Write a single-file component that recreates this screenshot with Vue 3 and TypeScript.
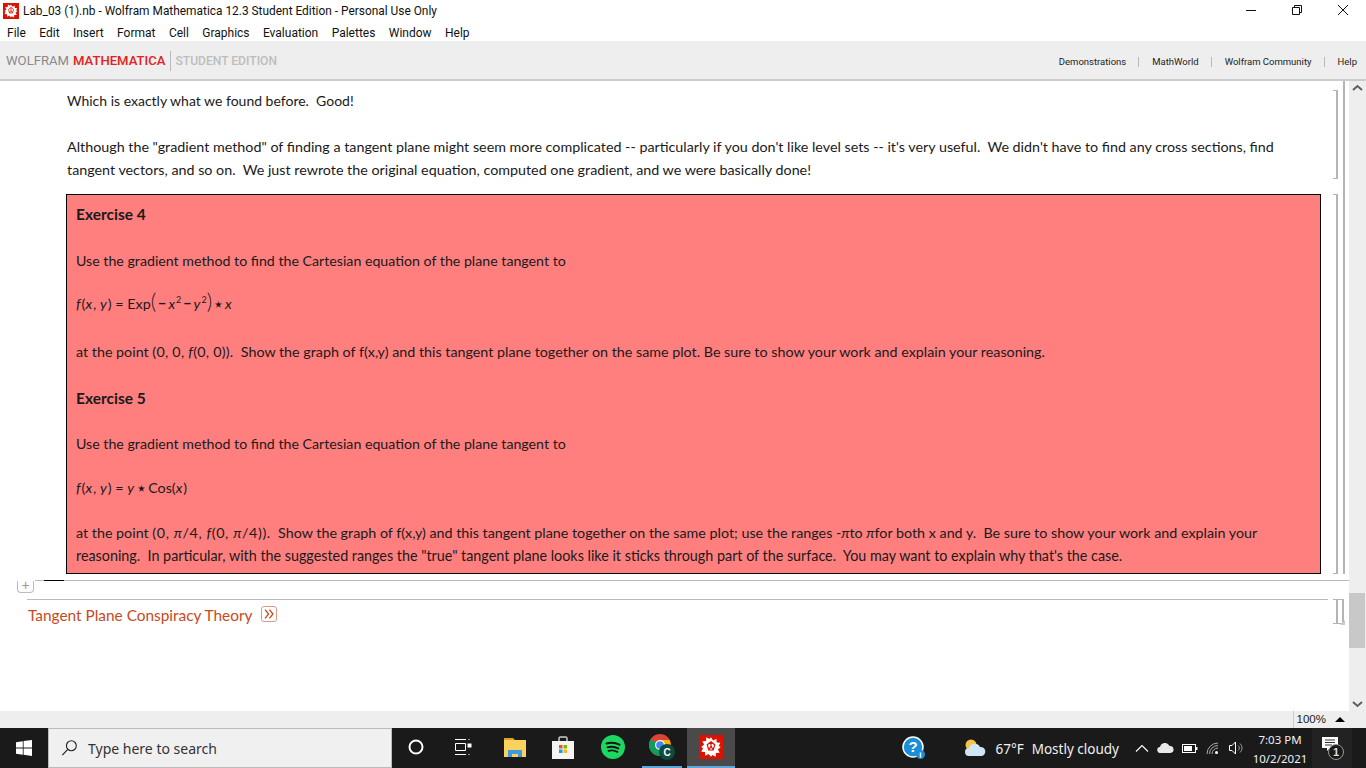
<script setup lang="ts">
const menus: string[] = ['File','Edit','Insert','Format','Cell','Graphics','Evaluation','Palettes','Window','Help']
const links: string[] = ['Demonstrations','MathWorld','Wolfram Community','Help']
</script>

<template>
  <div class="app">
    <header class="title">
      <svg class="appicon" viewBox="0 0 16 16"><rect width="16" height="16" fill="#dd1100"/><path d="M8 1.5l1.4 2.2 2.2-1.2.2 2.5 2.5.2-1.2 2.2L14.5 8l-1.9 1.6 1.2 2.2-2.5.2-.2 2.5-2.2-1.2L8 14.5l-1.6-1.9-2.2 1.2-.2-2.5-2.5-.2 1.2-2.2L1.5 8l1.9-1.6-1.2-2.2 2.5-.2.2-2.5 2.2 1.2z" fill="#fff"/><path d="M8 4.500l2.500 2-1 3.500h-3l-1-3.500zM8 4.500v3M6.500 10l1.500-2.500L9.500 10" fill="none" stroke="#dd1100" stroke-width=".8"/></svg>
      <span class="titletext">Lab_03 (1).nb - Wolfram Mathematica 12.3 Student Edition - Personal Use Only</span>
      <div class="winctl">
        <svg class="ctl" viewBox="0 0 46 22"><path d="M18 10.500h10" stroke="#111" fill="none"/></svg>
        <svg class="ctl" viewBox="0 0 46 22"><path d="M18.500 7.500h7v7h-7zM20.500 7.500v-2h7v7h-2" stroke="#111" fill="none"/></svg>
        <svg class="ctl" viewBox="0 0 46 22"><path d="M18 5l10 10M28 5l-10 10" stroke="#111" fill="none"/></svg>
      </div>
    </header>
    <nav class="menu"><span v-for="m in menus" :key="m">{{ m }}</span></nav>
    <div class="brand">
      <div class="logo"><span class="wolf">WOLFRAM</span><span class="math">MATHEMATICA</span><span class="stud">STUDENT EDITION</span></div>
      <div class="links"><span v-for="l in links" :key="l">{{ l }}</span></div>
    </div>
    <div class="mid">
      <main class="doc">
        <section class="cell text">
          <p class="l first">Which is exactly what we found before.&nbsp; Good!</p>
          <p class="l">&nbsp;</p>
          <p class="l">Although the "gradient method" of finding a tangent plane might seem more complicated -- particularly if you don't like level sets -- it's very useful.&nbsp; We didn't have to find any cross sections, find</p>
          <p class="l">tangent vectors, and so on.&nbsp; We just rewrote the original equation, computed one gradient, and we were basically done!</p>
        </section>
        <section class="red">
          <p class="l head">Exercise 4</p>
          <p class="l gap use">Use the gradient method to find the Cartesian equation of the plane tangent to</p>
          <p class="l gap-a math-line"><i>f</i>(<i>x</i>, <i>y</i>) = Exp<span class="paren">(</span><b class="op">−</b><i>x</i><sup>2</sup><b class="op">−</b><i>y</i><sup>2</sup><span class="paren">)</span><b class="star">⋆</b><i>x</i></p>
          <p class="l gap3">at the point <span class="m1">(0, 0, <i>f</i>(0, 0)).</span>&nbsp; Show the graph of f(x,y) and this tangent plane together on the same plot. Be sure to show your work and explain your reasoning.</p>
          <p class="l gap head down">Exercise 5</p>
          <p class="l gap use">Use the gradient method to find the Cartesian equation of the plane tangent to</p>
          <p class="l gap2 math-line"><i>f</i>(<i>x</i>, <i>y</i>) = <i>y</i><b class="star">⋆</b>Cos(<i>x</i>)</p>
          <p class="l gap-b">at the point <span class="m2">(0, <i>π</i>/4, <i>f</i>(0, <i>π</i>/4)).</span>&nbsp; Show the graph of f(x,y) and this tangent plane together on the same plot; use the ranges -<i>π</i>to <i>π</i>for both x and y.&nbsp; Be sure to show your work and explain your</p>
          <p class="l last">reasoning.&nbsp; In particular, with the suggested ranges the "true" tangent plane looks like it sticks through part of the surface.&nbsp; You may want to explain why that's the case.</p>
          <i class="brk b1"></i>
          <i class="brk outer"></i>
        </section>
        <div class="insert"><span class="plus">+</span><span class="tick"></span></div>
        <section class="sub">
          <span class="subtitle">Tangent Plane Conspiracy Theory</span>
          <span class="more"><svg viewBox="0 0 16 16" width="14" height="14"><path d="M3.500 3l4 5-4 5M8.500 3l4 5-4 5" fill="none" stroke="#c8491c" stroke-width="1.500"/></svg></span>
          <i class="brk s1"></i><i class="brk s2"></i><i class="tri"></i>
        </section>
      </main>
      <aside class="scroll">
        <svg viewBox="0 0 17 12" class="arr"><path d="M4 8l4.500-4 4.500 4" stroke="#606060" stroke-width="2" fill="none"/></svg>
        <div class="track"><div class="thumb"></div></div>
        <svg viewBox="0 0 17 12" class="arr"><path d="M4 4l4.500 4 4.500-4" stroke="#606060" stroke-width="2" fill="none"/></svg>
      </aside>
    </div>
    <div class="status"><span class="zoom">100%</span><span class="up"></span></div>
    <footer class="task">
      <div class="start"><svg viewBox="0 0 16 16" width="16" height="16"><path d="M0 2.200l6.800-1v6.300H0zM7.600 1.100L16 0v7.500H7.600zM0 8.400h6.800v6.400l-6.800-1zM7.600 8.400H16V16l-8.400-1.200z" fill="#fff"/></svg></div>
      <div class="search">
        <svg viewBox="0 0 20 20" width="18" height="18"><circle cx="11.500" cy="7.500" r="5.500" fill="none" stroke="#222" stroke-width="1.200"/><path d="M7.500 11.500L1.500 18" stroke="#222" stroke-width="1.300"/></svg>
        <span>Type here to search</span>
      </div>
      <div class="tb w48"><svg width="16" height="16" viewBox="0 0 16 16"><circle cx="8" cy="8" r="6.500" fill="none" stroke="#fff" stroke-width="2"/></svg></div>
      <div class="tb w46"><svg width="18" height="16" viewBox="0 0 18 16" fill="none" stroke="#fff"><path d="M1 .5h11M1 15.500h11M1.500 4.500h10v7h-10zM14.500 .5h1M14.500 15.500h1"/><rect x="14" y="5" width="3" height="3" fill="#fff"/></svg></div>
      <div class="tb w46 ml6"><svg width="23" height="20" viewBox="0 0 23 20"><path d="M0 1h9l2 2h-11z" fill="#d9a520"/><path d="M0 3h22v17H0z" fill="#fbd25e"/><path d="M4 20v-7h14v7h-4v-3H8v3z" fill="#3f9be0"/></svg></div>
      <div class="tb w50"><svg width="24" height="24" viewBox="0 0 24 24"><path d="M8 6V3.500A1.500 1.500 0 0 1 9.500 2h5A1.500 1.500 0 0 1 16 3.500V6" fill="none" stroke="#ccc" stroke-width="1.500"/><path d="M1 6h22v18H1z" fill="#f4f4f4"/><path d="M8 10h3.500v3.500H8z" fill="#f25022"/><path d="M12.500 10H16v3.500h-3.500z" fill="#7fba00"/><path d="M8 14.500h3.500V18H8z" fill="#00a4ef"/><path d="M12.500 14.500H16V18h-3.500z" fill="#ffb900"/></svg></div>
      <div class="tb w50"><svg width="24" height="24" viewBox="0 0 24 24"><circle cx="12" cy="12" r="12" fill="#1ed760"/><path d="M5.500 8.500c4-1.200 9-.9 13 1.200M6.500 12.300c3.500-1 7.500-.7 10.800 1.100M7.500 15.800c3-.8 6-.5 8.800 1" fill="none" stroke="#191414" stroke-width="1.900" stroke-linecap="round"/></svg></div>
      <div class="tb chrome"><svg width="26" height="26" viewBox="0 0 26 26"><circle cx="11" cy="11" r="11" fill="#db4437"/><path d="M11 11L1.500 5.500A11 11 0 0 0 11 22l5-9z" fill="#0f9d58"/><path d="M11 6h9.500A11 11 0 0 1 11 22z" fill="#f4b400"/><circle cx="11" cy="11" r="5" fill="#fff"/><circle cx="11" cy="11" r="3.800" fill="#4285f4"/><circle cx="18" cy="18" r="8" fill="#0d4a42"/><text x="18" y="22" text-anchor="middle" class="c">C</text></svg></div>
      <div class="tb active"><svg width="24" height="24" viewBox="0 0 16 16"><rect width="16" height="16" fill="#dd1100"/><path d="M8 1.500l1.400 2.200 2.200-1.200.2 2.500 2.500.2-1.200 2.200L14.500 8l-1.900 1.600 1.200 2.200-2.500.2-.2 2.500-2.200-1.200L8 14.500l-1.600-1.900-2.200 1.200-.2-2.500-2.500-.2 1.200-2.200L1.500 8l1.900-1.600-1.200-2.200 2.500-.2.200-2.500 2.200 1.200z" fill="#fff"/><path d="M8 4.500l2.500 2-1 3.500h-3l-1-3.500zM8 4.500v3M6.500 10l1.500-2.500L9.500 10" fill="none" stroke="#dd1100" stroke-width=".8"/></svg></div>
      <div class="spring"></div>
      <div class="tray">
        <svg class="help" width="24" height="24" viewBox="0 0 24 24"><circle cx="11" cy="11" r="10" fill="#1b8ed8" stroke="#fff" stroke-width="1.500"/><text x="11" y="16" text-anchor="middle" class="q">?</text><circle cx="18.500" cy="18.500" r="4.500" fill="#1b8ed8"/><path d="M18.500 16.500v5" stroke="#fff" stroke-width="1.500"/></svg>
        <svg class="cloud" width="22" height="18" viewBox="0 0 22 18"><circle cx="7" cy="6" r="5.500" fill="#f6c344"/><path d="M5 17a4 4 0 0 1 0-8 6 6 0 0 1 11-1 4.500 4.500 0 0 1 1.500 9z" fill="#cfe6f7"/></svg>
        <span class="temp">67°F</span><span class="wx">Mostly cloudy</span>
        <svg class="chev" width="14" height="8" viewBox="0 0 14 8"><path d="M1 7.500l6-6 6 6" fill="none" stroke="#fff" stroke-width="1.100"/></svg>
        <svg class="od" width="17" height="10" viewBox="0 0 17 10"><path d="M3.500 10a3 3 0 0 1-.5-6 5 5 0 0 1 9.500-1 3.500 3.500 0 0 1 1 7z" fill="#e8e8e8"/></svg>
        <svg class="bat" width="16" height="9" viewBox="0 0 16 9"><rect x=".5" y=".5" width="13" height="8" fill="none" stroke="#fff"/><rect x="2" y="2" width="8" height="5" fill="#fff"/><rect x="14" y="3" width="1.500" height="3" fill="#fff"/></svg>
        <svg class="wifi" width="13" height="13" viewBox="0 0 13 13" fill="none" stroke="#aaa"><path d="M1 12A11 11 0 0 1 12 1M3.500 12A8.500 8.500 0 0 1 12 3.500M6 12A6 6 0 0 1 12 6"/><circle cx="10.500" cy="10.500" r="1.500" fill="#fff" stroke="none"/></svg>
        <svg class="spk" width="17" height="14" viewBox="0 0 17 14" fill="none" stroke="#fff"><path d="M.5 4.500h2.500l3.500-3.500v12L3 9.500H.5z"/><path d="M9 4.500a3 3 0 0 1 0 5M11 2.500a6 6 0 0 1 0 9" stroke="#999"/></svg>
        <div class="clock"><span>7:03 PM</span><span>10/2/2021</span></div>
        <div class="notif"><svg width="26" height="26" viewBox="0 0 26 26"><path d="M3 2h16v11h-8l-3 3v-3H3z" fill="#fff"/><path d="M6 5h10M6 7.500h10M6 10h7" stroke="#333"/><circle cx="17" cy="17" r="7.500" fill="#1a1a1a" stroke="#999"/><text x="17" y="21" text-anchor="middle" class="n">1</text></svg></div>
      </div>
    </footer>
  </div>
</template>

<style>
html, body { margin: 0; overflow: hidden; }
</style>

<style scoped>
.app { width: 1366px; height: 768px; display: flex; flex-direction: column; background: #fff; font-family: "Open Sans", sans-serif; overflow: hidden; }
p { margin: 0; }
.title { height: 22px; flex: none; display: flex; align-items: center; }
.appicon { width: 16px; height: 16px; margin-left: 3px; flex: none; }
.titletext { margin-left: 4px; font: 11.9px/22px Roboto, sans-serif; color: #111; white-space: nowrap; }
.winctl { margin-left: auto; display: flex; }
.ctl { width: 46px; height: 22px; display: block; }
.menu { height: 19px; flex: none; display: flex; gap: 13.4px; padding-left: 7px; font: 12px/23px Roboto, sans-serif; color: #111; }
.brand { height: 38px; flex: none; background: #eee; border-bottom: 2px solid #ccc; display: flex; align-items: center; justify-content: space-between; }
.logo { display: flex; align-items: center; margin: 2px 0 0 6px; font: 13.1px/20px Roboto, sans-serif; }
.wolf { color: #8a8a8a; }
.math { color: #e0231c; margin-left: 4px; font-weight: 500; }
.stud { color: #bdbdbd; margin-left: 5px; padding-left: 4px; border-left: 1px solid #bbb; font-size: 12.1px; font-weight: 500; }
.links { display: flex; margin: 4px 9px 0 0; font: 9.5px/12px Roboto, sans-serif; color: #222; }
.links span { padding: 0 12px 0 13px; border-left: 1px solid #bbb; height: 10px; line-height: 10px; }
.links span:first-child { border: 0; }
.links span:last-child { padding-right: 0; }
.mid { flex: 1; min-height: 0; display: flex; }
.doc { flex: 1; min-width: 0; padding-top: 8px; font: 14.3px/23px Lato, sans-serif; color: #1a1a1a; }
.l { height: 23px; white-space: nowrap; }
.first { font-size: 14px; }
.use { font-size: 14.2px; }
.last { font-size: 14.34px; }
.head { font-size: 15.5px; font-weight: 700; }
.down { padding-top: 1px; height: 22px; }
.m1 { letter-spacing: .25px; }
.m2 { letter-spacing: .6px; }
.cell { margin-left: 67px; margin-right: 12px; }
.text { height: 92px; }
.red { position: relative; box-sizing: border-box; margin: 13px 0 0 66px; width: 1255px; height: 380px; background: #ff7f7f; border: 1px solid #000; padding: 8px 9px 0; }
.gap { margin-top: 23px; }
.gap-a { margin-top: 20px; }
.gap2 { margin-top: 21px; }
.gap-b { margin-top: 22px; }
.gap3 { margin-top: 25px; }
.math-line i { padding-right: 1px; }
.paren { font-size: 21px; line-height: 0; font-weight: 300; }
.op { margin: 0 2px; }
.star { margin: 0 2px; }
sup { font-size: 9px; line-height: 0; }
.brk { position: absolute; display: block; box-sizing: border-box; border: solid #b4b4b4; border-width: 1px 2px 1px 0; width: 5px; }
.b1 { left: 1266px; top: -1px; height: 380px; }
.outer { left: 1266px; top: -114px; height: 493px; width: 12px; border-width: 0 2px 0 0; }
.red::before { content: ""; position: absolute; left: 1266px; top: -105px; width: 5px; height: 89px; box-sizing: border-box; border: solid #b4b4b4; border-width: 1px 2px 1px 0; }
.insert { position: relative; height: 19px; margin-left: 35px; margin-top: 6px; border-top: 1px solid #bbb; box-sizing: border-box; }
.plus { position: absolute; left: -18px; top: 0; width: 17px; height: 12px; box-sizing: border-box; border: 1px solid #bbb; border-top: 0; border-radius: 0 0 4px 4px; color: #999; font: 14px/8px "Liberation Sans", sans-serif; text-align: center; }
.tick { position: absolute; left: 9px; top: -1px; width: 20px; height: 1px; background: #000; }
.sub { position: relative; margin-left: 27px; width: 1301px; height: 25px; box-sizing: border-box; border-top: 1px solid #bbb; padding: 6px 0 0 1px; display: flex; align-items: center; color: #c8491c; }
.subtitle { font: 15.4px/23px Lato, sans-serif; }
.more { margin: -3px 0 0 8px; width: 16px; height: 16px; box-sizing: border-box; border: 1px solid #d99a8a; border-radius: 3px; display: flex; align-items: center; justify-content: center; }
.s1 { left: 1306px; top: -1px; height: 25px; }
.s2 { left: 1311px; top: -1px; height: 25px; width: 6px; }
.tri { position: absolute; left: 1313px; top: 20px; width: 0; height: 0; border-left: 5px solid transparent; border-bottom: 5px solid #ccc; }
.scroll { width: 17px; flex: none; background: #eee; display: flex; flex-direction: column; }
.arr { width: 17px; height: 12px; flex: none; margin: 1px 0; }
.track { flex: 1; }
.thumb { margin: 498px 1px 0 0; height: 55px; background: #c8c8c8; }
.status { height: 17px; flex: none; background: #eee; display: flex; justify-content: flex-end; align-items: center; font: 11.5px/17px "Liberation Sans", sans-serif; color: #222; }
.zoom { border-left: 1px solid #ccc; padding-left: 3px; margin-right: 9px; }
.up { width: 0; height: 0; border: 5px solid transparent; border-top: 0; border-bottom: 5px solid #000; margin-right: 21px; }
.task { height: 40px; flex: none; background: #1a1a1a; display: flex; align-items: stretch; color: #fff; }
.start { width: 48px; display: flex; align-items: center; justify-content: center; flex: none; }
.search { width: 344px; flex: none; box-sizing: border-box; background: #f0f0f0; border: 1px solid #bbb; display: flex; align-items: center; padding-left: 12px; gap: 9px; color: #333; font: 14px "Noto Sans", sans-serif; }
.tb { flex: none; display: flex; align-items: center; justify-content: center; box-sizing: border-box; border-bottom: 2px solid transparent; }
.w46 { width: 46px; }
.w48 { width: 48px; }
.w50 { width: 50px; }
.ml6 { margin-left: 6px; }
.chrome { width: 40px; margin-left: 4px; border-bottom-color: #5ea7dc; }
.active { width: 48px; margin-left: 5px; background: #4a4a4a; border-bottom-color: #5ea7dc; }
.c { font: 700 10px "Liberation Sans", sans-serif; fill: #fff; }
.q { font: 700 15px "Liberation Sans", sans-serif; fill: #fff; }
.n { font: 700 11px "Liberation Sans", sans-serif; fill: #ddd; }
.spring { flex: 1; }
.tray { display: flex; align-items: center; margin-right: 13px; font: 13.5px "Noto Sans", sans-serif; color: #f0f0f0; }
.help { margin-right: 38px; }
.cloud { margin-right: 9px; }
.temp { margin: 2px 8px 0 0; }
.wx { margin-top: 2px; }
.chev { margin-left: 16px; margin-right: 8px; }
.od { margin-right: 8px; }
.bat { margin-right: 8px; }
.wifi { margin-right: 10px; }
.spk { margin-right: 5px; }
.clock { display: flex; flex-direction: column; align-items: center; width: 58px; padding-top: 2px; font-size: 11.5px; line-height: 19px; }
.notif { width: 40px; height: 40px; margin-left: 3px; margin-right: 1px; background: #222; display: flex; align-items: center; justify-content: center; }
</style>
